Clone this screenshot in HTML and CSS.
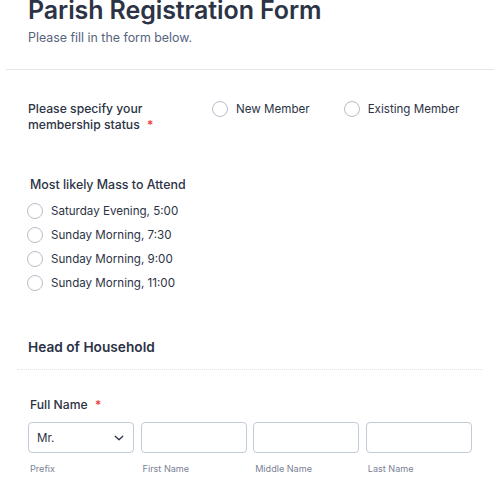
FILE: index.html
```html
<!DOCTYPE html>
<html>
<head>
<meta charset="utf-8">
<link rel="stylesheet" href="styles.css">
</head>
<body>
<div class="page">
  <header class="header">
    <h1 class="title">Parish Registration Form</h1>
    <p class="subtitle">Please fill in the form below.</p>
  </header>
  <div class="divider"></div>

  <section class="row-question">
    <div class="q-label">Please specify your membership status <span class="req">*</span></div>
    <div class="inline-options">
      <label class="opt"><span class="radio"></span>New Member</label>
      <label class="opt"><span class="radio"></span>Existing Member</label>
    </div>
  </section>

  <section class="mass">
    <div class="mass-label">Most likely Mass to Attend</div>
    <div class="stack-options">
      <label class="opt"><span class="radio"></span>Saturday Evening, 5:00</label>
      <label class="opt"><span class="radio"></span>Sunday Morning, 7:30</label>
      <label class="opt"><span class="radio"></span>Sunday Morning, 9:00</label>
      <label class="opt"><span class="radio"></span>Sunday Morning, 11:00</label>
    </div>
  </section>

  <section class="household">
    <h2 class="section-title">Head of Household</h2>
    <div class="dotted"></div>
  </section>

  <section class="fullname">
    <div class="fn-label">Full Name <span class="req">*</span></div>
    <div class="name-grid">
      <div class="field">
        <div class="box select">Mr.<svg class="chev" width="10" height="6" viewBox="0 0 10 6"><path d="M1.2 1.2l3.8 3.6 3.8-3.6" fill="none" stroke="#2c3345" stroke-width="1.3" stroke-linecap="round" stroke-linejoin="round"/></svg></div>
        <div class="sub">Prefix</div>
      </div>
      <div class="field">
        <div class="box"></div>
        <div class="sub">First Name</div>
      </div>
      <div class="field">
        <div class="box"></div>
        <div class="sub">Middle Name</div>
      </div>
      <div class="field">
        <div class="box"></div>
        <div class="sub">Last Name</div>
      </div>
    </div>
  </section>
</div>
</body>
</html>
```

FILE: styles.css
```css
* { box-sizing: border-box; }
html, body { margin: 0; padding: 0; background: #fff; }
body {
  font-family: Inter, "Noto Sans", sans-serif;
  color: #2c3345;
  width: 500px;
  height: 484px;
  overflow: hidden;
}
.page { padding: 0; }
.header { padding: 0 28px; margin-top: -5px; }
.title {
  margin: 0;
  font-size: 25px;
  line-height: 30px;
  font-weight: 600;
  color: #2c3345;
  letter-spacing: -0.1px;
}
.subtitle {
  margin: 4.5px 0 0;
  font-size: 12.4px;
  line-height: 15px;
  color: #57647e;
}
.divider {
  margin: 24.5px 6px 0;
  height: 1px;
  background: #e3e5ea;
}
.row-question {
  display: flex;
  align-items: flex-start;
  padding: 31px 0 0 28px;
}
.q-label {
  width: 184px;
  font-size: 12.2px;
  line-height: 16px;
  font-weight: 500;
  color: #2c3345;
}
.req { color: #f23a3c; margin-left: 4px; }
.inline-options { display: flex; gap: 34px; }
.opt {
  display: flex;
  align-items: center;
  font-size: 11.6px;
  line-height: 16px;
  color: #2c3345;
}
.radio {
  width: 16px;
  height: 16px;
  border: 1px solid #b8bdc9;
  border-radius: 50%;
  margin-right: 8px;
  flex: none;
}
.mass { padding: 44px 0 0 27px; }
.mass-label {
  font-size: 12.4px;
  line-height: 16px;
  color: #2c3345;
  font-weight: 500;
  padding-left: 3px;
  margin-bottom: 10px;
}
.stack-options { display: flex; flex-direction: column; gap: 8px; }
.household { padding: 47px 17px 0; }
.section-title {
  margin: 0 0 0 11px;
  font-size: 13.7px;
  line-height: 18px;
  font-weight: 600;
  color: #2c3345;
}
.dotted {
  margin-top: 13px;
  border-top: 1px dotted #e3e5ea;
}
.fullname { padding: 27px 28px 0; }
.fn-label {
  font-size: 12.2px;
  line-height: 16px;
  font-weight: 500;
  padding-left: 2px;
  margin-bottom: 9px;
}
.name-grid {
  display: grid;
  grid-template-columns: repeat(4, 106.2px);
  column-gap: 6.4px;
}
.box {
  height: 31px;
  border: 1px solid #c3cad8;
  border-radius: 4px;
  background: #fff;
}
.select {
  display: flex;
  align-items: center;
  justify-content: space-between;
  padding: 0 9px 0 8px;
  font-size: 11.6px;
  color: #2c3345;
}
.sub {
  margin-top: 10px;
  padding-left: 2px;
  font-size: 9.1px;
  line-height: 12px;
  color: #7a7f95;
}
```
